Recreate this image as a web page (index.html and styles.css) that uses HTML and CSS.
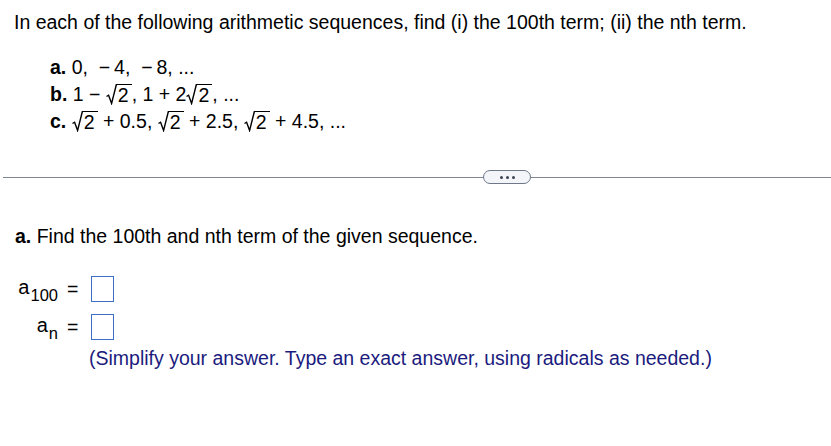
FILE: index.html
```html
<!DOCTYPE html>
<html>
<head>
<meta charset="utf-8">
<link rel="stylesheet" href="styles.css">
</head>
<body>
<div class="page">
  <p class="intro">In each of the following arithmetic sequences, find (i) the 100th term; (ii) the nth term.</p>
  <div class="seqs">
    <div class="seq"><b>a.</b> 0,&nbsp; −&thinsp;4,&nbsp; −&thinsp;8, ...</div>
    <div class="seq"><b>b.</b> 1 − <span class="sqrt"><svg class="rad" viewBox="0 0 11 21" width="11" height="21"><path d="M0.5 12.5 L2.6 11.2 L5.6 19.5 L10.3 0.8 L11 0.8" fill="none" stroke="#000" stroke-width="1.4"/></svg><span class="rc">2</span></span>, 1 + 2<span class="sqrt"><svg class="rad" viewBox="0 0 11 21" width="11" height="21"><path d="M0.5 12.5 L2.6 11.2 L5.6 19.5 L10.3 0.8 L11 0.8" fill="none" stroke="#000" stroke-width="1.4"/></svg><span class="rc">2</span></span>, ...</div>
    <div class="seq"><b>c.</b> <span class="sqrt"><svg class="rad" viewBox="0 0 11 21" width="11" height="21"><path d="M0.5 12.5 L2.6 11.2 L5.6 19.5 L10.3 0.8 L11 0.8" fill="none" stroke="#000" stroke-width="1.4"/></svg><span class="rc">2</span></span> + 0.5, <span class="sqrt"><svg class="rad" viewBox="0 0 11 21" width="11" height="21"><path d="M0.5 12.5 L2.6 11.2 L5.6 19.5 L10.3 0.8 L11 0.8" fill="none" stroke="#000" stroke-width="1.4"/></svg><span class="rc">2</span></span> + 2.5, <span class="sqrt"><svg class="rad" viewBox="0 0 11 21" width="11" height="21"><path d="M0.5 12.5 L2.6 11.2 L5.6 19.5 L10.3 0.8 L11 0.8" fill="none" stroke="#000" stroke-width="1.4"/></svg><span class="rc">2</span></span> + 4.5, ...</div>
  </div>
  <div class="divider">
    <div class="rule left"></div>
    <div class="pill"><span></span><span></span><span></span></div>
    <div class="rule"></div>
  </div>
  <p class="part"><b>a.</b> Find the 100th and nth term of the given sequence.</p>
  <div class="answers">
    <div class="arow"><span class="lhs">a<sub>100</sub></span><span class="eq">=</span><span class="box"></span></div>
    <div class="arow"><span class="lhs">a<sub>n</sub></span><span class="eq">=</span><span class="box"></span></div>
  </div>
  <p class="hint">(Simplify your answer. Type an exact answer, using radicals as needed.)</p>
</div>
</body>
</html>
```
FILE: styles.css
```css
html, body {
  margin: 0;
  padding: 0;
  background: #fff;
}
.page {
  font-family: "Liberation Sans", Arial, sans-serif;
  font-size: 19.5px;
  color: #000;
  padding-top: 11px;
}
.intro {
  margin: 0 0 0 14px;
  line-height: 22px;
}
.seqs {
  margin: 21px 0 0 50px;
}
.seq {
  height: 27px;
  line-height: 27px;
  white-space: nowrap;
}
.seq b {
  font-weight: bold;
}
.sqrt {
  display: inline-flex;
  align-items: flex-start;
  vertical-align: -4px;
  height: 22px;
  line-height: 20px;
}
.rad {
  display: block;
  margin-top: 0;
}
.rc {
  border-top: 1.4px solid #000;
  padding: 0 3px 0 1px;
  margin-top: 0.4px;
  line-height: 20px;
}
.divider {
  display: flex;
  align-items: center;
  margin: 34px 0 0 3px;
  height: 16px;
}
.rule {
  flex: 1;
  height: 1px;
  background: #7c8596;
}
.rule.left {
  flex: 0 0 480px;
}
.pill {
  width: 46px;
  height: 12px;
  border: 1.5px solid #6e7889;
  border-radius: 8px;
  background: #f3f5f8;
  display: flex;
  align-items: center;
  justify-content: center;
  gap: 3px;
}
.pill span {
  width: 3px;
  height: 3px;
  border-radius: 50%;
  background: #3a4150;
}
.part {
  margin: 40px 0 0 15px;
  line-height: 22px;
}
.answers {
  margin-top: 28px;
  display: flex;
  flex-direction: column;
  gap: 10px;
}
.arow {
  display: flex;
  align-items: center;
  height: 28px;
}
.lhs {
  width: 58px;
  text-align: right;
  font-size: 20px;
  line-height: 20px;
  position: relative;
  top: -2px;
}
.lhs sub {
  font-size: 16.5px;
  vertical-align: -7px;
  line-height: 0;
  margin-left: 1px;
}
.eq {
  margin-left: 9px;
  width: 24px;
}
.box {
  width: 21px;
  height: 24px;
  border: 1.5px solid #3d6dc5;
}
.hint {
  margin: 6px 0 0 89px;
  color: #1b1b7e;
  line-height: 22px;
}
```
